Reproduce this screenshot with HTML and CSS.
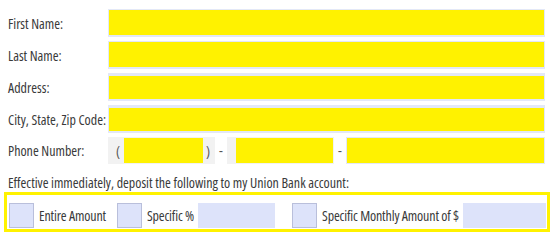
FILE: index.html
```html
<!DOCTYPE html>
<html lang="en">
  <head>
    <meta charset="UTF-8" />
    <title>Direct Deposit</title>
    <link rel="stylesheet" href="styles.css">
  </head>
  <body>
    <form class="deposit-form">
      <div class="form-row">
        <label for="firstName">First Name:</label>
        <input type="text" id="firstName" class="field" />
      </div>
      <div class="form-row">
        <label for="lastName">Last Name:</label>
        <input type="text" id="lastName" class="field" />
      </div>
      <div class="form-row">
        <label for="address">Address:</label>
        <input type="text" id="address" class="field thick" />
      </div>
      <div class="form-row">
        <label for="city">City, State, Zip Code:</label>
        <input type="text" id="city" class="field thick" />
      </div>
      <div class="form-row phone-row">
        <label for="areaCode">Phone Number:</label>
        <div class="phone-group area">
          <span class="paren">(</span>
          <input type="text" id="areaCode" class="phone-input area-input" />
          <span class="paren">)</span>
        </div>
        <span class="dash">-</span>
        <div class="phone-group prefix">
          <input type="text" id="prefix" class="phone-input prefix-input" />
        </div>
        <span class="dash">-</span>
        <input type="text" id="lineNumber" class="field line-input" />
      </div>

      <p class="instructions">Effective immediately, deposit the following to my Union Bank account:</p>

      <div class="amount-box">
        <input type="checkbox" id="entire" class="check" />
        <label for="entire" class="check-label">Entire Amount</label>

        <input type="checkbox" id="percent" class="check second" />
        <label for="percent" class="check-label">Specific %</label>
        <input type="text" class="amount-input percent-input" />

        <input type="checkbox" id="monthly" class="check third" />
        <label for="monthly" class="check-label">Specific Monthly Amount of $</label>
        <input type="text" class="amount-input monthly-input" />
      </div>
    </form>
  </body>
</html>
```

FILE: styles.css
```css
body {
  margin: 0;
  background: #ffffff;
  color: #3a3a3a;
  font-family: "Open Sans", "DejaVu Sans Condensed", sans-serif;
  font-stretch: 75%;
  font-size: 14px;
}

.deposit-form {
  padding: 9px 0 0 8px;
  width: 537px;
}

.form-row {
  display: flex;
  align-items: center;
  height: 28px;
  margin-bottom: 4px;
}

.form-row label {
  width: 100px;
  flex: none;
  white-space: nowrap;
}

.field {
  flex: 1;
  height: 28px;
  box-sizing: border-box;
  border: 1px solid #e3e8f7;
  border-bottom-width: 2px;
  background: #fff200;
  margin: 0;
  padding: 0;
}

.field.thick {
  border-top-width: 3px;
}

.phone-row {
  height: 27px;
  margin-top: 1px;
}

.phone-group {
  display: flex;
  align-items: center;
  background: #f2f2f2;
  height: 27px;
}

.phone-group.area {
  width: 107px;
  padding-left: 8px;
  box-sizing: border-box;
}

.paren {
  color: #555;
}

.phone-input {
  height: 25px;
  border: none;
  background: #fff200;
  margin: 0;
  padding: 0;
}

.area-input {
  width: 79px;
  margin: 0 3px 0 4px;
}

.phone-group.prefix {
  width: 107px;
  padding-left: 9px;
  box-sizing: border-box;
}

.prefix-input {
  width: 97px;
}

.dash {
  width: 12px;
  text-align: center;
  color: #555;
}

.line-input {
  height: 27px;
  border-bottom-width: 1px;
}

.instructions {
  margin: 11px 0 1px;
  line-height: 16px;
}

.amount-box {
  display: flex;
  align-items: center;
  box-sizing: border-box;
  margin-left: -4px;
  width: 546px;
  height: 40px;
  border: 3px solid #fff200;
  padding: 6px 1px 0 2px;
}

.check {
  appearance: none;
  width: 25px;
  height: 25px;
  margin: 0;
  box-sizing: border-box;
  border: 1px solid #b9bfdb;
  background: #dde3fa;
  flex: none;
}

.check.second {
  margin-left: 11px;
}

.check.third {
  margin-left: 17px;
}

.check-label {
  margin-left: 5px;
  white-space: nowrap;
  letter-spacing: -0.15px;
}

.amount-input {
  height: 25px;
  border: none;
  background: #dde3fa;
  margin: 0 0 0 4px;
  padding: 0;
}

.percent-input {
  width: 77px;
}

.monthly-input {
  flex: 1;
  min-width: 0;
}
```
